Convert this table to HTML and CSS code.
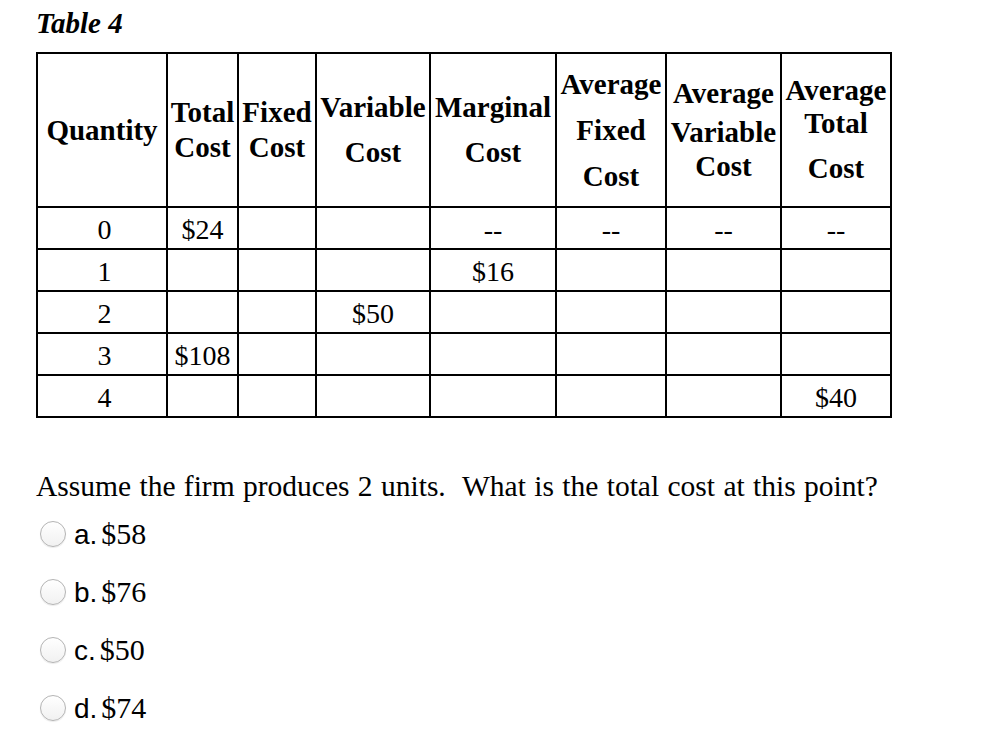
FILE: index.html
```html
<!DOCTYPE html>
<html lang="en">
<head>
<meta charset="utf-8">
<title>Table 4</title>
<link rel="stylesheet" href="styles.css">
</head>
<body>
<div class="page">
  <h1 class="title">Table 4</h1>
  <table class="cost">
    <colgroup>
      <col class="w-q"><col class="w-tfc"><col class="w-fc"><col class="w-vc">
      <col class="w-mc"><col class="w-afc"><col class="w-avc"><col class="w-atc">
    </colgroup>
    <thead>
      <tr>
        <th class="h-q"><div>Quantity</div></th>
        <th class="h-35"><div>Total</div><div>Cost</div></th>
        <th class="h-35"><div>Fixed</div><div>Cost</div></th>
        <th class="h-45"><div>Variable</div><div>Cost</div></th>
        <th class="h-45"><div>Marginal</div><div>Cost</div></th>
        <th class="h-46"><div>Average</div><div>Fixed</div><div>Cost</div></th>
        <th class="h-avc"><div>Average</div><div class="gap-5">Variable</div><div>Cost</div></th>
        <th class="h-atc"><div>Average</div><div>Total</div><div class="gap-12">Cost</div></th>
      </tr>
    </thead>
    <tbody>
      <tr>
        <td class="qty">0</td><td>$24</td><td></td><td></td><td>--</td><td>--</td><td>--</td><td>--</td>
      </tr>
      <tr>
        <td class="qty">1</td><td></td><td></td><td></td><td>$16</td><td></td><td></td><td></td>
      </tr>
      <tr>
        <td class="qty">2</td><td></td><td></td><td>$50</td><td></td><td></td><td></td><td></td>
      </tr>
      <tr>
        <td class="qty">3</td><td>$108</td><td></td><td></td><td></td><td></td><td></td><td></td>
      </tr>
      <tr>
        <td class="qty">4</td><td></td><td></td><td></td><td></td><td></td><td></td><td>$40</td>
      </tr>
    </tbody>
  </table>

  <p class="question">Assume the firm produces 2 units.&nbsp; What is the total cost at this point?</p>
  <ul class="options">
    <li class="option"><input type="radio" name="ans" class="radio" id="oa"><label class="answer" for="oa"><span class="letter">a.</span><span class="amount">$58</span></label></li>
    <li class="option"><input type="radio" name="ans" class="radio" id="ob"><label class="answer" for="ob"><span class="letter">b.</span><span class="amount">$76</span></label></li>
    <li class="option"><input type="radio" name="ans" class="radio" id="oc"><label class="answer" for="oc"><span class="letter">c.</span><span class="amount">$50</span></label></li>
    <li class="option"><input type="radio" name="ans" class="radio" id="od"><label class="answer" for="od"><span class="letter">d.</span><span class="amount">$74</span></label></li>
  </ul>
</div>
</body>
</html>
```

FILE: styles.css
```css
* {
  box-sizing: border-box;
}

body {
  margin: 0;
  background: #ffffff;
  color: #000000;
  font-family: "Liberation Serif", "Times New Roman", serif;
}

.page {
  padding: 7px 0 0 36px;
}

.title {
  margin: 0;
  font-size: 29px;
  line-height: 32px;
  font-weight: bold;
  font-style: italic;
}

/* table */
.cost {
  margin-top: 13px;
  width: 856px;
  table-layout: fixed;
  border-spacing: 0;
  border-left: 2px solid #000;
  border-top: 2px solid #000;
}

.w-q { width: 130px; }
.w-tfc { width: 71px; }
.w-fc { width: 78px; }
.w-vc { width: 114px; }
.w-mc { width: 126px; }
.w-afc { width: 110px; }
.w-avc { width: 115px; }
.w-atc { width: 110px; }

.cost th,
.cost td {
  padding: 0;
  text-align: center;
  border-right: 2px solid #000;
  border-bottom: 2px solid #000;
}

.cost th {
  height: 154px;
  font-size: 29px;
  font-weight: bold;
  vertical-align: middle;
  white-space: nowrap;
}

.h-q { line-height: 32px; }
.h-35 { line-height: 35px; }
.h-45 { line-height: 45px; }
.h-46 { line-height: 46px; }

.cost th.h-avc {
  vertical-align: top;
  padding-top: 22px;
  line-height: 34px;
}

.cost th.h-atc {
  vertical-align: top;
  padding-top: 20px;
  line-height: 33px;
}

.gap-5 { margin-top: 5px; }
.gap-12 { margin-top: 12px; }

.cost td {
  height: 42px;
  padding-top: 4px;
  font-size: 28px;
  line-height: 32px;
  vertical-align: middle;
}

.cost td.qty {
  padding-left: 5px;
}

/* question */
.question {
  margin: 52px 0 0;
  font-size: 29.5px;
  line-height: 32px;
  word-spacing: 1px;
}

.options {
  list-style: none;
  margin: 16px 0 0;
  padding: 0;
  display: flex;
  flex-direction: column;
  gap: 26px;
}

.option {
  display: flex;
  align-items: center;
  height: 32px;
  line-height: 32px;
}

.radio {
  appearance: none;
  -webkit-appearance: none;
  flex: none;
  margin: 0 8px 0 4px;
  width: 26px;
  height: 26px;
  border-radius: 50%;
  border: 1px solid #b4b4b4;
  background: linear-gradient(#ffffff, #f1f1f1);
  box-shadow: 0 1px 1px rgba(0, 0, 0, 0.08);
}

.answer {
  display: flex;
  align-items: baseline;
}

.letter {
  font-family: "Liberation Sans", Arial, sans-serif;
  font-size: 28px;
  margin-right: 4px;
}

.amount {
  font-family: "Liberation Serif", "Times New Roman", serif;
  font-size: 30px;
}
```
